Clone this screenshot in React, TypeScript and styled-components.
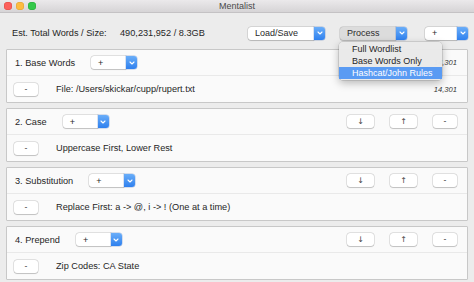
import styled, { createGlobalStyle } from "styled-components";

const Global = createGlobalStyle`
  html, body {
    margin: 0;
    padding: 0;
    background: #ececec;
    overflow: hidden;
  }
  body {
    font-family: "Liberation Sans", Helvetica, Arial, sans-serif;
    color: #262626;
  }
`;

const Window = styled.div`
  width: 474px;
  height: 282px;
  overflow: hidden;
  background: #ececec;
`;

const TitleBar = styled.div`
  position: relative;
  height: 12px;
  display: flex;
  align-items: center;
  justify-content: center;
  background: linear-gradient(#ebe9eb, #d6d4d6);
  border-bottom: 1px solid #c4c2c4;
`;

const Lights = styled.div`
  position: absolute;
  left: 4px;
  top: 2px;
  display: flex;
  gap: 4.5px;
`;

const Light = styled.span<{ $color: string; $edge: string }>`
  width: 7.5px;
  height: 7.5px;
  border-radius: 50%;
  background: ${(p) => p.$color};
  box-shadow: inset 0 0 0 0.5px ${(p) => p.$edge};
`;

const Title = styled.div`
  font-size: 9px;
  color: #4a4a4a;
  line-height: 12px;
`;

const Content = styled.div`
  padding-top: 13px;
`;

const InfoBar = styled.div`
  height: 14px;
  display: flex;
  align-items: center;
  padding: 0 6px 0 12px;
  margin-bottom: 9px;
  font-size: 9.2px;
`;

const InfoLabel = styled.div`
  width: 108px;
`;

const InfoValue = styled.div`
  flex: 1;
`;

const Controls = styled.div`
  display: flex;
  align-items: center;
`;

const PopUpWrap = styled.div<{ $width: number; $gap?: number }>`
  position: relative;
  width: ${(p) => p.$width}px;
  height: 13px;
  margin-left: ${(p) => p.$gap ?? 0}px;
  display: flex;
  flex-shrink: 0;
`;

const PopUpBody = styled.div<{ $pressed?: boolean }>`
  flex: 1;
  display: flex;
  align-items: center;
  padding-left: 7px;
  font-size: 9px;
  color: #2a2a2a;
  background: ${(p) => (p.$pressed ? "#dcdcdc" : "#ffffff")};
  border-radius: 3px 0 0 3px;
  box-shadow: 0 0 0 0.5px rgba(0, 0, 0, 0.18), 0 0.5px 1px rgba(0, 0, 0, 0.15);
`;

const PopUpArrow = styled.div`
  width: 11px;
  display: flex;
  align-items: center;
  justify-content: center;
  border-radius: 0 3px 3px 0;
  background: linear-gradient(#6aaef9, #2f80ee);
  box-shadow: 0 0 0 0.5px rgba(0, 60, 160, 0.3);
`;

const Menu = styled.div`
  position: absolute;
  left: -1px;
  top: 15px;
  width: 103px;
  padding: 1px 0 1px;
  background: rgba(234, 234, 234, 0.98);
  border-radius: 4px;
  box-shadow: 0 0 0 0.5px rgba(0, 0, 0, 0.2), 0 3px 9px rgba(0, 0, 0, 0.28);
  z-index: 5;
`;

const MenuItem = styled.div<{ $active?: boolean }>`
  height: 12px;
  line-height: 12px;
  padding-left: 13px;
  font-size: 9px;
  color: ${(p) => (p.$active ? "#ffffff" : "#262626")};
  background: ${(p) => (p.$active ? "#5a9bf3" : "transparent")};
`;

const Sections = styled.div`
  display: flex;
  flex-direction: column;
  gap: 5px;
  padding: 0 6px;
`;

const Box = styled.div`
  background: #fafafa;
  border: 1px solid #c8c8c8;
  border-radius: 1px;
`;

const Header = styled.div`
  height: 25px;
  display: flex;
  align-items: center;
  padding: 0 10px 0 8px;
  border-bottom: 1px solid #e9e9e9;
`;

const SectionTitle = styled.div`
  font-size: 9.2px;
  margin-right: 16px;
`;

const RightGroup = styled.div`
  margin-left: auto;
  display: flex;
  align-items: center;
  gap: 16px;
`;

const Row = styled.div`
  height: 26px;
  display: flex;
  align-items: center;
  padding: 0 10px 0 7px;
`;

const SmallButton = styled.div<{ $width: number }>`
  width: ${(p) => p.$width}px;
  height: 13px;
  display: flex;
  align-items: center;
  justify-content: center;
  background: #ffffff;
  border-radius: 3px;
  box-shadow: 0 0 0 0.5px rgba(0, 0, 0, 0.18), 0 0.5px 1px rgba(0, 0, 0, 0.15);
  font-family: "DejaVu Sans", sans-serif;
  font-size: 8px;
  color: #444;
`;

const RowText = styled.div`
  margin-left: 18px;
  font-size: 9.2px;
`;

const Count = styled.div`
  margin-left: auto;
  font-size: 7.6px;
  font-style: italic;
  color: #333;
`;

function Chevron() {
  return (
    <svg width="6" height="4" viewBox="0 0 6 4">
      <path d="M1 1 L3 3 L5 1" fill="none" stroke="#fff" strokeWidth="1.1" strokeLinecap="round" strokeLinejoin="round" />
    </svg>
  );
}

type PopUpProps = {
  label: string;
  width: number;
  gap?: number;
  pressed?: boolean;
  children?: React.ReactNode;
};

function PopUp({ label, width, gap, pressed, children }: PopUpProps) {
  return (
    <PopUpWrap $width={width} $gap={gap}>
      <PopUpBody $pressed={pressed}>{label}</PopUpBody>
      <PopUpArrow>
        <Chevron />
      </PopUpArrow>
      {children}
    </PopUpWrap>
  );
}

type SectionData = {
  title: string;
  row: string;
  count?: string;
};

const sections: SectionData[] = [
  { title: "1. Base Words", row: "File: /Users/skickar/cupp/rupert.txt", count: "14,301" },
  { title: "2. Case", row: "Uppercase First, Lower Rest" },
  { title: "3. Substitution", row: "Replace First: a -> @, i -> ! (One at a time)" },
  { title: "4. Prepend", row: "Zip Codes: CA State" },
];

function Section({ data }: { data: SectionData }) {
  return (
    <Box>
      <Header>
        <SectionTitle>{data.title}</SectionTitle>
        <PopUp label="+" width={46} />
        {data.count ? (
          <Count>{data.count}</Count>
        ) : (
          <RightGroup>
            <SmallButton $width={27}>↓</SmallButton>
            <SmallButton $width={27}>↑</SmallButton>
            <SmallButton $width={24}>-</SmallButton>
          </RightGroup>
        )}
      </Header>
      <Row>
        <SmallButton $width={24}>-</SmallButton>
        <RowText>{data.row}</RowText>
        {data.count && <Count>{data.count}</Count>}
      </Row>
    </Box>
  );
}

export default function App() {
  return (
    <Window>
      <Global />
      <TitleBar>
        <Lights>
          <Light $color="#fc605c" $edge="#de4a44" />
          <Light $color="#fdbc40" $edge="#de9f34" />
          <Light $color="#34c84a" $edge="#27a83a" />
        </Lights>
        <Title>Mentalist</Title>
      </TitleBar>
      <Content>
        <InfoBar>
          <InfoLabel>Est. Total Words / Size:</InfoLabel>
          <InfoValue>490,231,952 / 8.3GB</InfoValue>
          <Controls>
            <PopUp label="Load/Save" width={77} />
            <PopUp label="Process" width={67} gap={15} pressed>
              <Menu>
                <MenuItem>Full Wordlist</MenuItem>
                <MenuItem>Base Words Only</MenuItem>
                <MenuItem $active>Hashcat/John Rules</MenuItem>
              </Menu>
            </PopUp>
            <PopUp label="+" width={43} gap={18} />
          </Controls>
        </InfoBar>
        <Sections>
          {sections.map((s) => (
            <Section key={s.title} data={s} />
          ))}
        </Sections>
      </Content>
    </Window>
  );
}
